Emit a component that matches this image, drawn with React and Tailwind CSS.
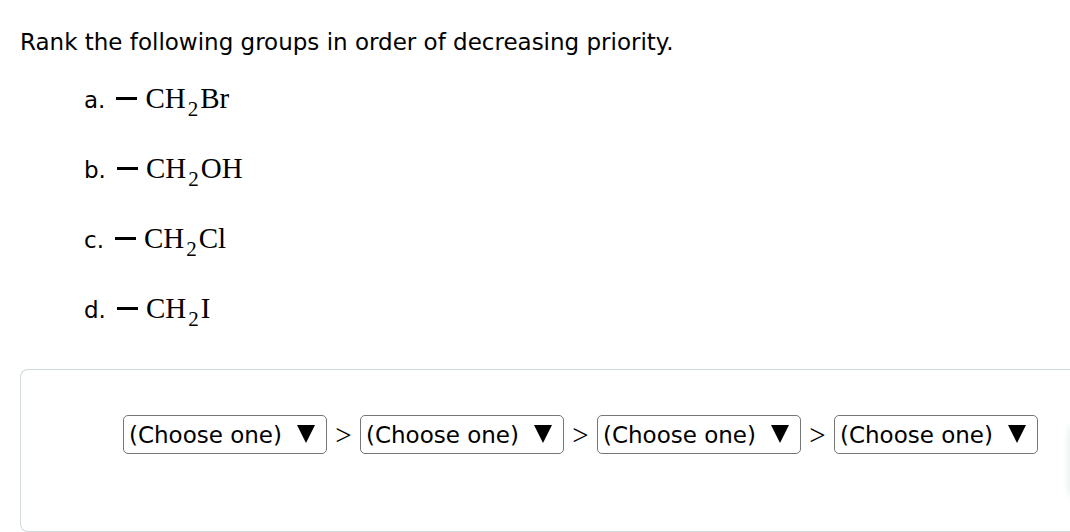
import React from "react";

const groups = [
  { id: "a", tail: "Br" },
  { id: "b", tail: "OH" },
  { id: "c", tail: "Cl" },
  { id: "d", tail: "I" },
];

const ranks = ["First", "Second", "Third", "Fourth"];

function Formula({ tail }) {
  return (
    <span className="flex items-baseline font-['Liberation_Serif',serif] text-[29px] leading-9">
      <svg className="mr-2 h-[3px] w-[21px] self-center" viewBox="0 0 21 3" aria-hidden="true">
        <rect width="21" height="3" fill="black" />
      </svg>
      CH
      <span className="relative top-2 mx-0.5 text-[21px] leading-none">2</span>
      {tail}
    </span>
  );
}

function RankSelect({ label }) {
  return (
    <span className="relative flex w-[204px]">
      <select
        aria-label={label}
        defaultValue=""
        className="h-[39px] w-full appearance-none rounded-[5px] border border-[#767676] bg-white pr-8 pl-[5px] text-[23px] text-black"
      >
        <option value="">(Choose one)</option>
        {groups.map((g) => (
          <option key={g.id} value={g.id}>
            {g.id}
          </option>
        ))}
      </select>
      <svg
        className="pointer-events-none absolute top-[10px] right-3 h-[18px] w-[18px]"
        viewBox="0 0 18 18"
        aria-hidden="true"
      >
        <path d="M0 0H18L9 18Z" fill="black" />
      </svg>
    </span>
  );
}

export default function App() {
  return (
    <main className="relative overflow-hidden bg-white pt-7 pl-5 font-['DejaVu_Sans',sans-serif] text-[23px] leading-7 text-black">
      <h1>Rank the following groups in order of decreasing priority.</h1>
      <ul className="mt-6 flex flex-col gap-[34px] pl-16">
        {groups.map((g) => (
          <li key={g.id} className="flex items-baseline gap-[11px]">
            <span>{g.id}.</span>
            <Formula tail={g.tail} />
          </li>
        ))}
      </ul>
      <section className="relative mt-[43px] rounded-l-lg border border-r-0 border-[#d0dadb] pt-[45px] pb-[77px] pl-[102px]">
        <div className="flex items-center">
          {ranks.map((rank, i) => (
            <React.Fragment key={rank}>
              {i > 0 && (
                <span className="w-[33px] text-center font-['Liberation_Serif',serif] text-[29px] leading-7">
                  &gt;
                </span>
              )}
              <RankSelect label={`${rank} priority`} />
            </React.Fragment>
          ))}
        </div>
        <div className="absolute top-14 left-full h-[70px] w-10 rounded-lg shadow-[0_0_10px_#dde8e8]" />
      </section>
    </main>
  );
}
